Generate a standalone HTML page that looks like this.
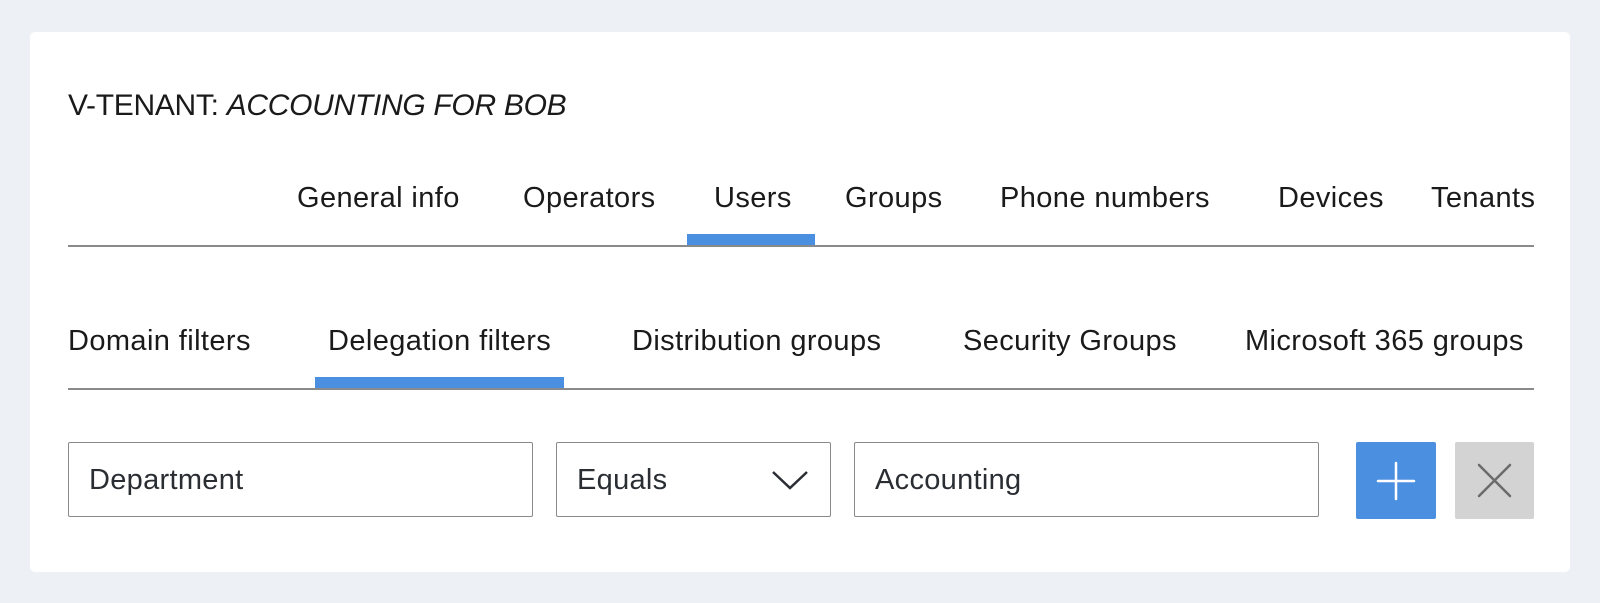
<!DOCTYPE html>
<html><head><meta charset="utf-8"><style>
body{margin:0;width:1600px;height:603px;background:#edf0f5;font-family:"Liberation Sans",sans-serif;position:relative;overflow:hidden;color:#1a1a1a}
.card{position:absolute;left:30px;top:32px;width:1540px;height:540px;background:#fff;border-radius:5px}
.a{position:absolute;white-space:nowrap;font-size:29px;line-height:30px;letter-spacing:0.4px}
.line{position:absolute;left:68px;width:1466px;height:2px;background:#8a8a8a}
.ul{position:absolute;height:11px;background:#4a8fe0}
.in{position:absolute;top:442px;height:73px;border:1.5px solid #8a8a8a;border-radius:2px;background:#fff}
.in span{position:absolute;left:20px;top:20px;font-size:29px;line-height:34px;color:#2a2e33;letter-spacing:0.3px}
.btn{position:absolute;top:442px;height:77px;border-radius:2px}
</style></head><body>
<div class="card"></div>
<div class="a" style="left:68px;top:91px;font-size:30px;letter-spacing:-0.3px">V-TENANT: <i>ACCOUNTING FOR BOB</i></div>
<div class="a" style="left:297px;top:183px">General info</div>
<div class="a" style="left:523px;top:183px">Operators</div>
<div class="a" style="left:714px;top:183px">Users</div>
<div class="a" style="left:845px;top:183px">Groups</div>
<div class="a" style="left:1000px;top:183px">Phone numbers</div>
<div class="a" style="left:1278px;top:183px">Devices</div>
<div class="a" style="left:1431px;top:183px">Tenants</div>
<div class="ul" style="left:687px;top:234px;width:128px"></div>
<div class="line" style="top:245px"></div>
<div class="a" style="left:68px;top:326px">Domain filters</div>
<div class="a" style="left:328px;top:326px">Delegation filters</div>
<div class="a" style="left:632px;top:326px">Distribution groups</div>
<div class="a" style="left:963px;top:326px">Security Groups</div>
<div class="a" style="left:1245px;top:326px">Microsoft 365 groups</div>
<div class="ul" style="left:315px;top:377px;width:249px"></div>
<div class="line" style="top:388px"></div>
<div class="in" style="left:68px;width:463px"><span>Department</span></div>
<div class="in" style="left:556px;width:273px"><span>Equals</span>
<svg style="position:absolute;left:214px;top:26px" width="38" height="22"><path d="M2 3 L19 19 L36 3" stroke="#2a2e33" stroke-width="2.5" fill="none"/></svg></div>
<div class="in" style="left:854px;width:463px"><span>Accounting</span></div>
<div class="btn" style="left:1356px;width:80px;background:#4a8fe0"><svg width="80" height="77"><path d="M40 21V57M22 39H58" stroke="#fff" stroke-width="2.5" stroke-linecap="round"/></svg></div>
<div class="btn" style="left:1455px;width:79px;background:#d3d3d3"><svg width="79" height="77"><path d="M24 23L55 54M55 23L24 54" stroke="#6b6b6b" stroke-width="2.5" stroke-linecap="round"/></svg></div>
</body></html>
